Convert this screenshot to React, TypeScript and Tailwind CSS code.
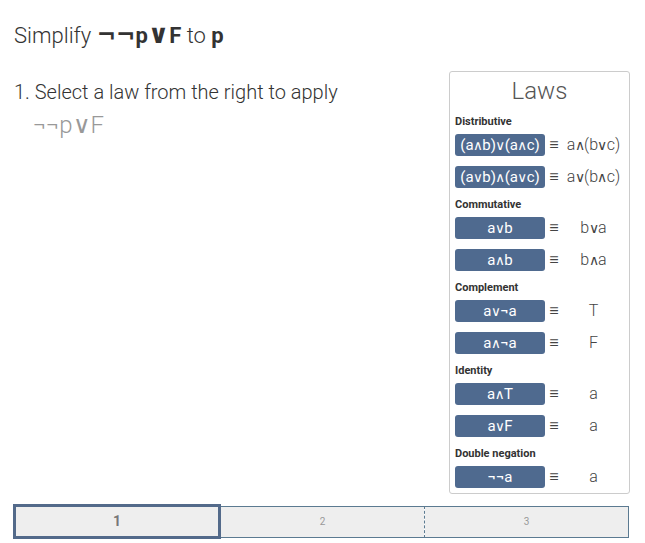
import React from "react";

const F = { fontFamily: "Roboto, 'Liberation Sans', 'Noto Sans', sans-serif" };

type Law = { l: string; r: string };
const sections: { name: string; laws: Law[] }[] = [
  { name: "Distributive", laws: [{ l: "(a∧b)∨(a∧c)", r: "a∧(b∨c)" }, { l: "(a∨b)∧(a∨c)", r: "a∨(b∧c)" }] },
  { name: "Commutative", laws: [{ l: "a∨b", r: "b∨a" }, { l: "a∧b", r: "b∧a" }] },
  { name: "Complement", laws: [{ l: "a∨¬a", r: "T" }, { l: "a∧¬a", r: "F" }] },
  { name: "Identity", laws: [{ l: "a∧T", r: "a" }, { l: "a∨F", r: "a" }] },
  { name: "Double negation", laws: [{ l: "¬¬a", r: "a" }] },
];

function Expr({ s }: { s: string }) {
  return (
    <>
      {Array.from(s).map((c, i) =>
        c === "∧" || c === "∨" ? (
          <span key={i} className="font-['DejaVu_Sans'] text-[0.9em] mx-[-0.6px]">
            {c}
          </span>
        ) : (
          <React.Fragment key={i}>{c}</React.Fragment>
        )
      )}
    </>
  );
}

export default function App() {
  return (
    <div className="w-[645px] h-[543px] bg-white relative" style={F}>
      <div className="flex px-[14px]">
        <div className="flex-1">
          <div className="pt-[20px] text-[22px] leading-[30px] font-light text-[#333]">
            Simplify{" "}
            <span className="font-bold">
              <span className="font-['DejaVu_Sans'] text-[1.05em]">¬¬</span>p
              <span className="font-['DejaVu_Sans'] text-[1.2em] leading-[0]">∨</span>F
            </span>{" "}
            to <span className="font-bold">p</span>
          </div>
          <div className="mt-[27px] text-[20px] leading-[28px] font-light text-[#333]">
            1. Select a law from the right to apply
          </div>
          <div className="ml-[19px] mt-[4px] text-[24px] leading-[30px] font-light text-[#999]">¬¬p∨F</div>
        </div>
        <div className="mt-[71px] w-[181px] border border-[#ccc] rounded-[3px] px-[5px] pb-[5px] shrink-0 mr-[1px]">
          <div className="mt-[5px] text-center text-[24px] leading-[28px] font-light text-[#555]">Laws</div>
          <div className="h-[10px]" />
          {sections.map((s) => (
            <div key={s.name}>
              <div className="text-[11px] leading-[14px] font-bold text-[#333] mb-[5px]">{s.name}</div>
              {s.laws.map((law, i) => (
                <div key={i} className={"flex items-center h-[22px] " + (i === s.laws.length - 1 && s.name === "Double negation" ? "" : "mb-[10px]")}>
                  <div className="w-[90px] h-[22px] rounded-[3px] bg-[#4f6a8f] text-white text-[15px] leading-[22px] text-center whitespace-nowrap">
                    <Expr s={law.l} />
                  </div>
                  <div className="w-[18px] text-center text-[16px] font-light text-[#444]">≡</div>
                  <div className="flex-1 text-center text-[16px] font-light text-[#444] whitespace-nowrap">
                    <Expr s={law.r} />
                  </div>
                </div>
              ))}
            </div>
          ))}
        </div>
      </div>
      <div className="mx-[13px] mt-[10px] flex items-center h-[35px] w-[616px]">
        <div className="w-[208px] h-[35px] border-[3px] border-[#536a8a] bg-[#eeeeee] flex items-center justify-center text-[14px] font-bold text-[#777]">1</div>
        <div className="flex-1 h-[32px] border-y border-[#5b7a91] bg-[#eeeeee] flex items-center justify-center text-[10px] text-[#999]">2</div>
        <div className="w-0 h-[32px] border-l border-dashed border-[#5b7a91]" />
        <div className="flex-1 h-[32px] border-y border-r border-[#5b7a91] bg-[#eeeeee] flex items-center justify-center text-[10px] text-[#999]">3</div>
      </div>
    </div>
  );
}
